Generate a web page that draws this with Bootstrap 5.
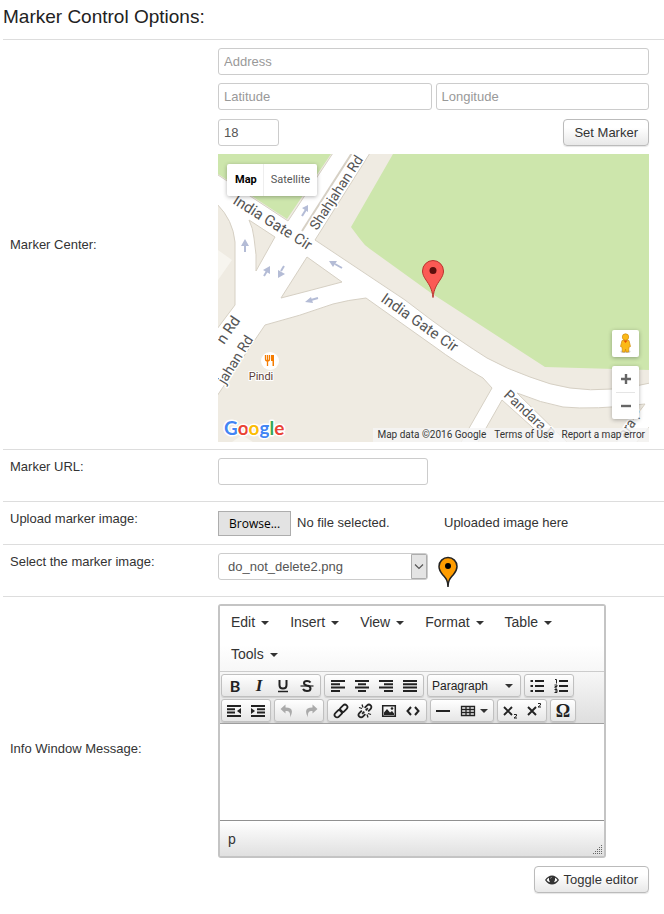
<!DOCTYPE html>
<html lang="en">
<head>
<meta charset="utf-8">
<meta name="viewport" content="width=device-width, initial-scale=1">
<title>Marker Control Options</title>
<link href="https://cdn.jsdelivr.net/npm/bootstrap@5.3.0/dist/css/bootstrap.min.css" rel="stylesheet">
<style>
body{font:13px/18px "Liberation Sans",Arial,sans-serif;color:#333;background:#fff}
.page{padding:0 0 20px 3px}
.page-title{font-size:19px;line-height:24px;font-weight:400;color:#222;padding:5px 0 10px;margin:0}
.opt{border-top:1px solid #ddd;padding:8px 15px 8px 7px}
.opt-map{padding-bottom:7px}
.opt-tall{padding-bottom:16px}
.opt-name{flex:0 0 208px}
.field,.pick{height:27px;border:1px solid #ccc;border-radius:3px;padding:0 5px;font-size:13px;line-height:18px;color:#555;background-color:#fff;min-width:0}
.field::placeholder{color:#999;opacity:1}
.latlng{margin-bottom:9px}
.zoom-field{width:61px}
.half{width:210px}
.pushbtn{height:27px;padding:0 10px;font-size:13px;line-height:18px;color:#333;border:1px solid #bbb;border-radius:4px;background:linear-gradient(#fff 30%,#e8e8e8);box-shadow:0 1px 1px rgba(0,0,0,.1)}
.pick{appearance:none;padding-left:9px;background:#fff url("data:image/svg+xml,%3Csvg xmlns='http://www.w3.org/2000/svg' width='16' height='25'%3E%3Cpath fill='%23e4e4e4' stroke='%23adadad' d='M.5 .5h15v24H.5z'/%3E%3Cpath fill='none' stroke='%23555' stroke-width='1.2' d='M4 10.500l4 4 4-4'/%3E%3C/svg%3E") right 0 center no-repeat}
.picked{margin:3px 0 -8px 9px}
.browse{font:12px/23px "Open Sans","Noto Sans",sans-serif;color:#000;border:1px solid #adadad;background:#e3e3e3;padding:0 10px;cursor:pointer}
.upload{height:26px}
.file-note{padding-left:6px}
.map{height:288px;overflow:hidden;background:#efebe2;font-family:Roboto,sans-serif}
.map-art{display:block;width:100%;height:288px}
.map-card{position:absolute;background:#fff;border-radius:2px;box-shadow:0 1px 4px rgba(0,0,0,.3)}
.map-card button{border:0;background:none;padding:0;color:#565656;font-size:11px;line-height:16px}
.map-type{left:9px;top:10px;height:32px}
.map-type button{padding:8px 7px}
.map-type button:first-child{color:#000;font-weight:700;border-right:1px solid #eee;padding-left:8px;padding-right:6px}
.peg{right:10px;bottom:85px;width:27px;height:27px}
.zoomer{right:10px;bottom:23px;width:27px;height:53px}
.zoomer button,.peg button{height:26px;width:27px}
.zoomer hr{margin:0 4px;border-color:#999;height:1px}
.credits{position:absolute;right:0;bottom:0;height:14px;font-size:10px;line-height:14px;color:#444;background:rgba(245,245,245,.8);white-space:nowrap}
.credits>*{padding:0 4px;color:#333;text-decoration:none}
.editor{max-width:388px;border:2px solid #c4c4c4;border-radius:3px}
.opt-editor{padding-top:7px}
.menus{padding-bottom:1px;border-bottom:1px solid #ccc;background:linear-gradient(#fff 60%,#f7f7f7)}
.menus button{border:0;background:none;font-size:14px;line-height:18px;padding:7px 10px 7px 11px;color:#333}
.caret{display:inline-block;border:4px solid transparent;border-top-color:#333;border-bottom:0;vertical-align:middle}
.menus .caret{margin-left:6px}
.tools{padding:2px 1px 1px;gap:2px;background:linear-gradient(#f7f7f7,#dedede);border-bottom:1px solid #a0a0a0}
.tools-line{gap:3px}
.tool-set{height:23px;border:1px solid #c0c0c0;border-radius:3px;background:linear-gradient(#fff,#e6e6e6);box-shadow:0 1px 1px rgba(0,0,0,.12)}
.quad{padding:0 1px}
.tool-set button{border:0;background:none;padding:0;width:24px;color:#222;display:flex;align-items:center;justify-content:center;line-height:16px}
.tool-set button.wide{width:92px;justify-content:space-between;padding:0 7px 0 4px;font-size:12px}
.tool-set button.mid{width:38px;gap:4px}
.tool-set svg{width:16px;height:16px;fill:none;stroke:#222;stroke-width:2}
.gl{font:700 16px/16px Lato,sans-serif}
.gl-i{font:italic 700 17px/16px "Liberation Serif",serif}
.gl-o{font:700 18px/18px "Liberation Serif",serif}
.writing{display:block;width:100%;height:96px;border:0;resize:none;padding:8px;outline:0}
.status{height:35px;padding:0 8px;font-size:14px;background:linear-gradient(#fff,#e0e0e0);border-top:1px solid #909090;box-sizing:content-box}
.grip{position:absolute;right:0;bottom:0}
.toggle-line{padding-top:8px}
</style>
</head>
<body>
<main class="page">
<h1 class="page-title">Marker Control Options:</h1>

<section class="opt opt-map d-flex align-items-center">
  <label class="opt-name" for="addr">Marker Center:</label>
  <div class="flex-grow-1">
    <div class="d-flex mb-2"><input class="field w-100" id="addr" type="text" placeholder="Address"></div>
    <div class="d-flex gap-1 latlng">
      <input class="field flex-fill" type="text" placeholder="Latitude" aria-label="Latitude">
      <input class="field flex-fill" type="text" placeholder="Longitude" aria-label="Longitude">
    </div>
    <div class="d-flex justify-content-between mb-2">
      <input class="field zoom-field" type="text" value="18" aria-label="Zoom level">
      <button class="pushbtn" type="button">Set Marker</button>
    </div>
    <div class="map position-relative">
      <svg class="map-art" viewBox="0 0 431 288" preserveAspectRatio="xMidYMid slice" role="img" aria-label="Street map around India Gate Circle">
        <path fill="#fff" d="M0 0h431v288H0z"/>
        <g fill="#efebe2" stroke="#d6d0c4">
          <path d="M-1-1H115L70 67 0 21z"/>
          <path d="M152-1 97 86l90 60 25 19q30 22 57 39 20 11 43 19 20 8 40 11 20 3 42 1 19-1 38-6V-1z"/>
          <path d="M134-1 84 77" fill="none" stroke-width="2"/>
          <path d="M31 66l26 17-19 34q1-16-2-33-1-10-5-18z"/>
          <path d="M89 103l35 25q-30 8-61 16z"/>
          <path d="M-1 50q16 16 18 38v63L-1 175z"/>
          <path d="M-1 242 47 171q35-9 68-21 15-4 33-6l69 49q20 15 48 31l9 10-32 56H-1z"/>
          <path d="M284 246l49 44h-74z"/>
          <path d="M299 239q24 10 46 14 30 3 82-3l-30 40h-46z"/>
          <path d="M432 272v17h-14z"/>
        </g>
        <path fill="#cde6ac" d="M0 0h113L69 65 0 20zM175 0 133 73l9 12q4 6 10 10l61 44 114 74 104 3V0z"/>
        <path fill="#f7f5ef" d="M0 96l14 10L0 126zM14 288l10-7 11 7z"/>
        <g fill="none" stroke="#b4bcd6" stroke-width="2">
          <path d="M84 62l5-8"/>
          <path d="M27 98v-7M46 122l3-5M63 117l3-5M124 114l-7-4M100 144l-7 2"/>
        </g>
        <path fill="#b4bcd6" d="M90 51v7l-6-4zM27 85l4 7h-8zM52 112v8l-7-4zM60 124v-8l7 4zM111 107h8l-4 6zM87 148l6-5 2 6z"/>
        <g font-size="15" fill="#555" stroke="#fff" stroke-width="3" paint-order="stroke" stroke-linejoin="round">
          <text transform="translate(14 49) rotate(32)">India Gate Cir</text>
          <text transform="translate(162 147) rotate(35)">India Gate Cir</text>
          <text font-size="14" transform="translate(99 77) rotate(-57)">Shahjahan Rd</text>
          <text transform="translate(6 191) rotate(-56)">n Rd</text>
          <text font-size="14" transform="translate(7 231) rotate(-58)">jahan Rd</text>
          <text font-size="14" transform="translate(285 242) rotate(43)">Pandara R</text>
          <text font-size="14" transform="translate(407 285) rotate(-54)">ara P</text>
        </g>
        <circle cx="52" cy="207" r="9" fill="#fff"/>
        <path d="M47.500 201v4q0 2 2 2t2-2v-4M49.500 201v11" fill="none" stroke="#f57c00" stroke-width="1.300"/>
        <path d="M53 201h3v11h-1.500v-5H53z" fill="#f57c00"/>
        <text x="43" y="226" text-anchor="middle" font-size="11" fill="#5d4037" stroke="#fff" stroke-width="2" paint-order="stroke">Pindi</text>
        <path d="M215 143.500c-1-9-4-13-7-17.500-2-3-3.500-5.500-3.500-9a10.500 10.500 0 0 1 21 0c0 3.500-1.500 6-3.500 9-3 4.500-6 8.500-7 17.500z" fill="#fb5a54" stroke="#b8332e"/>
        <circle cx="215" cy="116.500" r="3.500" fill="#5c0f0c"/>
        <text x="6" y="281" font-family="Lato,sans-serif" font-size="19" font-weight="700" stroke="#fff" stroke-width="3" stroke-linejoin="round" paint-order="stroke"><tspan fill="#4285f4">G</tspan><tspan fill="#ea4335">o</tspan><tspan fill="#fbbc05">o</tspan><tspan fill="#4285f4">g</tspan><tspan fill="#34a853">l</tspan><tspan fill="#ea4335">e</tspan></text>
      </svg>
      <div class="map-card map-type d-flex"><button type="button">Map</button><button type="button">Satellite</button></div>
      <div class="map-card peg"><button type="button" aria-label="Street View" class="d-flex align-items-center justify-content-center">
        <svg width="13" height="20" viewBox="0 0 13 20"><ellipse cx="6.500" cy="18.500" rx="5" ry="1.500" fill="#ccc"/><path d="M3 7.500h7l1.500 6-1.500.5-.5 5H7l-.5-3-.5 3H3.500l-.5-5-1.500-.5z" fill="#fbb917" stroke="#d08d12" stroke-width=".7"/><circle cx="6.500" cy="4" r="3.200" fill="#fbb917" stroke="#d08d12" stroke-width=".7"/><path d="M4.500 7.500h4l-2 2.500z" fill="#e65100"/></svg></button></div>
      <div class="map-card zoomer">
        <button type="button" aria-label="Zoom in" class="d-flex align-items-center justify-content-center"><svg width="10" height="10"><path d="M5 0v10M0 5h10" stroke="#666" stroke-width="2.400"/></svg></button>
        <hr>
        <button type="button" aria-label="Zoom out" class="d-flex align-items-center justify-content-center"><svg width="10" height="10"><path d="M0 5h10" stroke="#666" stroke-width="2.400"/></svg></button>
      </div>
      <div class="credits d-flex"><span>Map data ©2016 Google</span><a href="#">Terms of Use</a><a href="#">Report a map error</a></div>
    </div>
  </div>
</section>

<section class="opt opt-tall d-flex">
  <label class="opt-name" for="url">Marker URL:</label>
  <input class="field half" id="url" type="text">
</section>

<section class="opt d-flex">
  <label class="opt-name" for="file">Upload marker image:</label>
  <div class="upload d-flex align-items-center">
    <div class="half d-flex align-items-center">
      <input class="visually-hidden" id="file" type="file">
      <label class="browse" for="file">Browse...</label>
      <span class="file-note">No file selected.</span>
    </div>
    <span class="ps-3">Uploaded image here</span>
  </div>
</section>

<section class="opt opt-tall d-flex">
  <label class="opt-name" for="img">Select the marker image:</label>
  <select class="pick half" id="img"><option>do_not_delete2.png</option></select>
  <svg class="picked flex-shrink-0" width="22" height="32" viewBox="0 0 22 32" aria-hidden="true"><path d="M11 31c0-7-2.500-9-5.500-12.500C3.500 16 2 13.500 2 10.500a9 9 0 0 1 18 0c0 3-1.500 5.500-3.500 8C13.500 22 11 24 11 31z" fill="#ff9c00" stroke="#222" stroke-width="1.500"/><circle cx="11" cy="10" r="3" fill="#000"/></svg>
</section>

<section class="opt opt-editor d-flex align-items-center">
  <label class="opt-name" for="msg">Info Window Message:</label>
  <div class="flex-grow-1">
    <div class="editor">
      <div class="menus d-flex flex-wrap">
        <button type="button">Edit<span class="caret"></span></button>
        <button type="button">Insert<span class="caret"></span></button>
        <button type="button">View<span class="caret"></span></button>
        <button type="button">Format<span class="caret"></span></button>
        <button type="button">Table<span class="caret"></span></button>
        <button type="button">Tools<span class="caret"></span></button>
      </div>
      <div class="tools d-flex flex-column">
        <div class="tools-line d-flex">
          <div class="tool-set quad d-flex">
            <button type="button" aria-label="Bold"><span class="gl">B</span></button>
            <button type="button" aria-label="Italic"><span class="gl-i">I</span></button>
            <button type="button" aria-label="Underline"><svg viewBox="0 0 16 16"><path d="M4.500 2v5q0 3.500 3.500 3.500T11.500 7V2"/><path d="M3 13.500h10" stroke-width="1.500"/></svg></button>
            <button type="button" aria-label="Strikethrough"><svg viewBox="0 0 16 16"><path d="M11.500 4.500Q10.500 3 8 3 5 3 5 5t3 2.500q3.500.5 3.500 3T8 13q-3 0-4-2"/><path d="M1.500 8h13" stroke-width="1.200"/></svg></button>
          </div>
          <div class="tool-set quad d-flex">
            <button type="button" aria-label="Align left"><svg viewBox="0 0 16 16"><path d="M1 3h14M1 6.300h9M1 9.600h14M1 13h9"/></svg></button>
            <button type="button" aria-label="Align center"><svg viewBox="0 0 16 16"><path d="M1 3h14M4 6.300h8M1 9.600h14M4 13h8"/></svg></button>
            <button type="button" aria-label="Align right"><svg viewBox="0 0 16 16"><path d="M1 3h14M6 6.300h9M1 9.600h14M6 13h9"/></svg></button>
            <button type="button" aria-label="Justify"><svg viewBox="0 0 16 16"><path d="M1 3h14M1 6.300h14M1 9.600h14M1 13h14"/></svg></button>
          </div>
          <div class="tool-set d-flex"><button type="button" class="wide">Paragraph<span class="caret"></span></button></div>
          <div class="tool-set d-flex">
            <button type="button" aria-label="Bullet list"><svg viewBox="0 0 16 16"><path d="M6 3h9M6 8h9M6 13h9M1.500 3h2.500M1.500 8h2.500M1.500 13h2.500"/></svg></button>
            <button type="button" aria-label="Numbered list"><svg viewBox="0 0 16 16"><path d="M6 3h9M6 8h9M6 13h9"/><path stroke-width="1" d="M2 1.500h1.500v4M1.500 7H4v1.500H2V10h2M1.500 11.500H4v3H1.500M2 13h2"/></svg></button>
          </div>
        </div>
        <div class="tools-line d-flex">
          <div class="tool-set d-flex">
            <button type="button" aria-label="Outdent"><svg viewBox="0 0 16 16"><path d="M1 3h14M1 6.300h8M1 9.600h8M1 13h14"/><path d="M15 5v6l-4-3z" fill="#222" stroke="none"/></svg></button>
            <button type="button" aria-label="Indent"><svg viewBox="0 0 16 16"><path d="M1 3h14M7 6.300h8M7 9.600h8M1 13h14"/><path d="M1 5v6l4-3z" fill="#222" stroke="none"/></svg></button>
          </div>
          <div class="tool-set d-flex">
            <button type="button" aria-label="Undo"><svg viewBox="0 0 16 16"><path d="M6.500 1.500 1.500 6l5 4.500V8q5.500-1 4.500 6.500 5.500-10-4.500-10z" fill="#aaa" stroke="none"/></svg></button>
            <button type="button" aria-label="Redo"><svg viewBox="0 0 16 16"><path d="M9.500 1.500l5 4.500-5 4.500V8Q4 7 5 14.500q-5.500-10 4.500-10z" fill="#aaa" stroke="none"/></svg></button>
          </div>
          <div class="tool-set quad d-flex">
            <button type="button" aria-label="Insert link"><svg viewBox="0 0 16 16"><g transform="rotate(-45 8 8)" stroke-width="1.800"><rect x="0" y="5.500" width="8.500" height="5" rx="2.500"/><rect x="7.500" y="5.500" width="8.500" height="5" rx="2.500"/></g></svg></button>
            <button type="button" aria-label="Remove link"><svg viewBox="0 0 16 16"><g transform="rotate(-45 8 8)" stroke-width="1.800"><path d="M6 5.500H2.500a2.500 2.500 0 0 0 0 5H6M10 5.500h3.500a2.500 2.500 0 0 1 0 5H10M4 8h3M9 8h3"/></g><path d="M2 4.500l3 1M5 1.500l1 3M14 11.500l-3-1M11 14.500l-1-3" stroke-width="1.300"/></svg></button>
            <button type="button" aria-label="Insert image"><svg viewBox="0 0 16 16"><path d="M1.700 2.700h12.600v10.600H1.700z" stroke-width="1.500"/><path d="M3 12V9.500L6 6l3 3.500L11 8l2 2.500V12z" fill="#222" stroke="none"/><circle cx="11" cy="5.500" r="1.300" fill="#222" stroke="none"/></svg></button>
            <button type="button" aria-label="Source code"><svg viewBox="0 0 16 16"><path d="M6 4 2.500 8 6 12M10 4l3.500 4-3.500 4"/></svg></button>
          </div>
          <div class="tool-set d-flex">
            <button type="button" aria-label="Horizontal line"><svg viewBox="0 0 16 16"><path d="M1 8h14"/></svg></button>
            <button type="button" class="mid" aria-label="Table"><svg viewBox="0 0 16 16"><path d="M1.500 3.500h13v9h-13zM1 6.500h14M1 9.500h14M6 3v10M10 3v10" stroke-width="1.300"/></svg><span class="caret"></span></button>
          </div>
          <div class="tool-set d-flex">
            <button type="button" aria-label="Subscript"><svg viewBox="0 0 16 16"><path d="M2 4l8 8M10 4l-8 8" stroke-width="1.900"/><path d="M12 11.500h2.500V13L12 15h3" stroke-width="1"/></svg></button>
            <button type="button" aria-label="Superscript"><svg viewBox="0 0 16 16"><path d="M2 4l8 8M10 4l-8 8" stroke-width="1.900"/><path d="M12 .5h2.500V2L12 4h3" stroke-width="1"/></svg></button>
          </div>
          <div class="tool-set d-flex"><button type="button" aria-label="Special character"><span class="gl-o">Ω</span></button></div>
        </div>
      </div>
      <textarea class="writing" id="msg"></textarea>
      <div class="status d-flex align-items-center position-relative">p
        <svg class="grip" width="12" height="12" fill="none" stroke="#666" stroke-width="1" stroke-dasharray="1 1" aria-hidden="true"><path d="M9 1.500h2M7 3.500h4M5 5.500h6M3 7.500h8M1 9.500h10"/></svg>
      </div>
    </div>
    <div class="toggle-line d-flex justify-content-end">
      <button class="pushbtn d-flex align-items-center" type="button"><svg class="me-1 flex-shrink-0" width="15" height="10" viewBox="0 0 15 10" aria-hidden="true"><path d="M0 5q3-4.500 7-4.500T14 5q-3 4.500-7 4.500T0 5z" fill="#333"/><path d="M1.500 5q1-1.500 2.500-2.300-.5 2.500 1 4.600Q2.700 6.700 1.500 5zM12.500 5q-1-1.500-2.500-2.300.5 2.500-1 4.600 2.300-.6 3.500-2.300zM7 2Q5.500 2.200 5.300 4" fill="#fff"/></svg>Toggle editor</button>
    </div>
  </div>
</section>
</main>
<script src="https://cdn.jsdelivr.net/npm/bootstrap@5.3.0/dist/js/bootstrap.bundle.min.js"></script>
</body>
</html>
